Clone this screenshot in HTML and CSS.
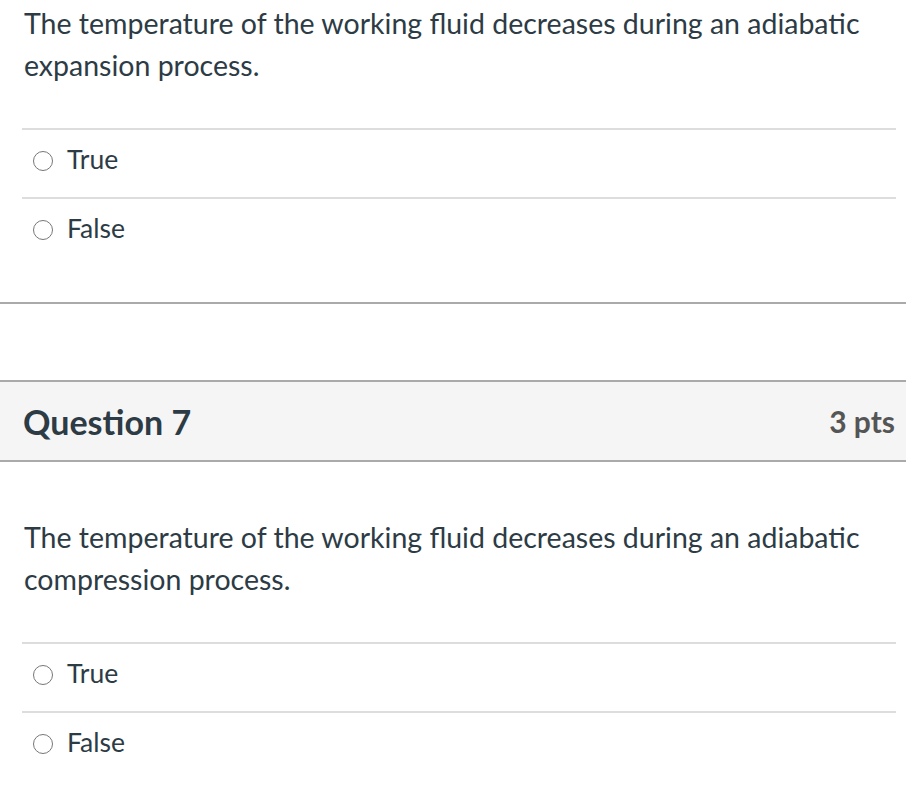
FILE: index.html
```html
<!DOCTYPE html>
<html lang="en">

<head>
    <meta charset="UTF-8">
    <meta name="viewport" content="width=device-width, initial-scale=1.0">
    <title>Quiz</title>
    <link rel="stylesheet" href="styles.css">
</head>

<body>
    <div class="question first">
        <div class="question-text">
            The temperature of the working fluid decreases during an adiabatic expansion process.
        </div>
        <div class="answers">
            <label class="answer"><input type="radio" name="q6"><span class="radio"></span>True</label>
            <label class="answer"><input type="radio" name="q6"><span class="radio"></span>False</label>
        </div>
    </div>

    <div class="question">
        <div class="question-header">
            <h2>Question 7</h2>
            <span class="pts">3 pts</span>
        </div>
        <div class="question-text">
            The temperature of the working fluid decreases during an adiabatic compression process.
        </div>
        <div class="answers">
            <label class="answer"><input type="radio" name="q7"><span class="radio"></span>True</label>
            <label class="answer"><input type="radio" name="q7"><span class="radio"></span>False</label>
        </div>
    </div>
</body>

</html>
```

FILE: styles.css
```css
body {
    margin: 0;
    font-family: Lato, "Noto Sans", sans-serif;
    color: #2d3b45;
    background: #fff;
}

.question {
    margin-bottom: 76px;
}

.question.first {
    border-bottom: 2px solid #aaa;
    padding-bottom: 36px;
}

.question-header {
    display: flex;
    justify-content: space-between;
    align-items: center;
    height: 78px;
    padding: 0 11px 0 23px;
    background-color: #f5f5f5;
    border-top: 2px solid #aaa;
    border-bottom: 2px solid #aaa;
    margin-bottom: 52px;
}

.question-header h2 {
    margin: 0;
    font-size: 34px;
    font-weight: 700;
}

.pts {
    font-size: 30px;
    font-weight: 700;
    color: #555;
}

.question-text {
    padding: 2px 30px 0 24px;
    font-size: 28.5px;
    line-height: 42px;
}

.answers {
    margin: 42px 10px 0 22px;
}

.answer {
    display: flex;
    align-items: center;
    height: 58px;
    padding-bottom: 9px;
    border-top: 2px solid #ddd;
    font-size: 26.5px;
}

.answer input {
    display: none;
}

.answer .radio {
    width: 18px;
    height: 18px;
    margin: 4px 14px 0 11px;
    border: 1.5px solid #777;
    border-radius: 50%;
}
```
